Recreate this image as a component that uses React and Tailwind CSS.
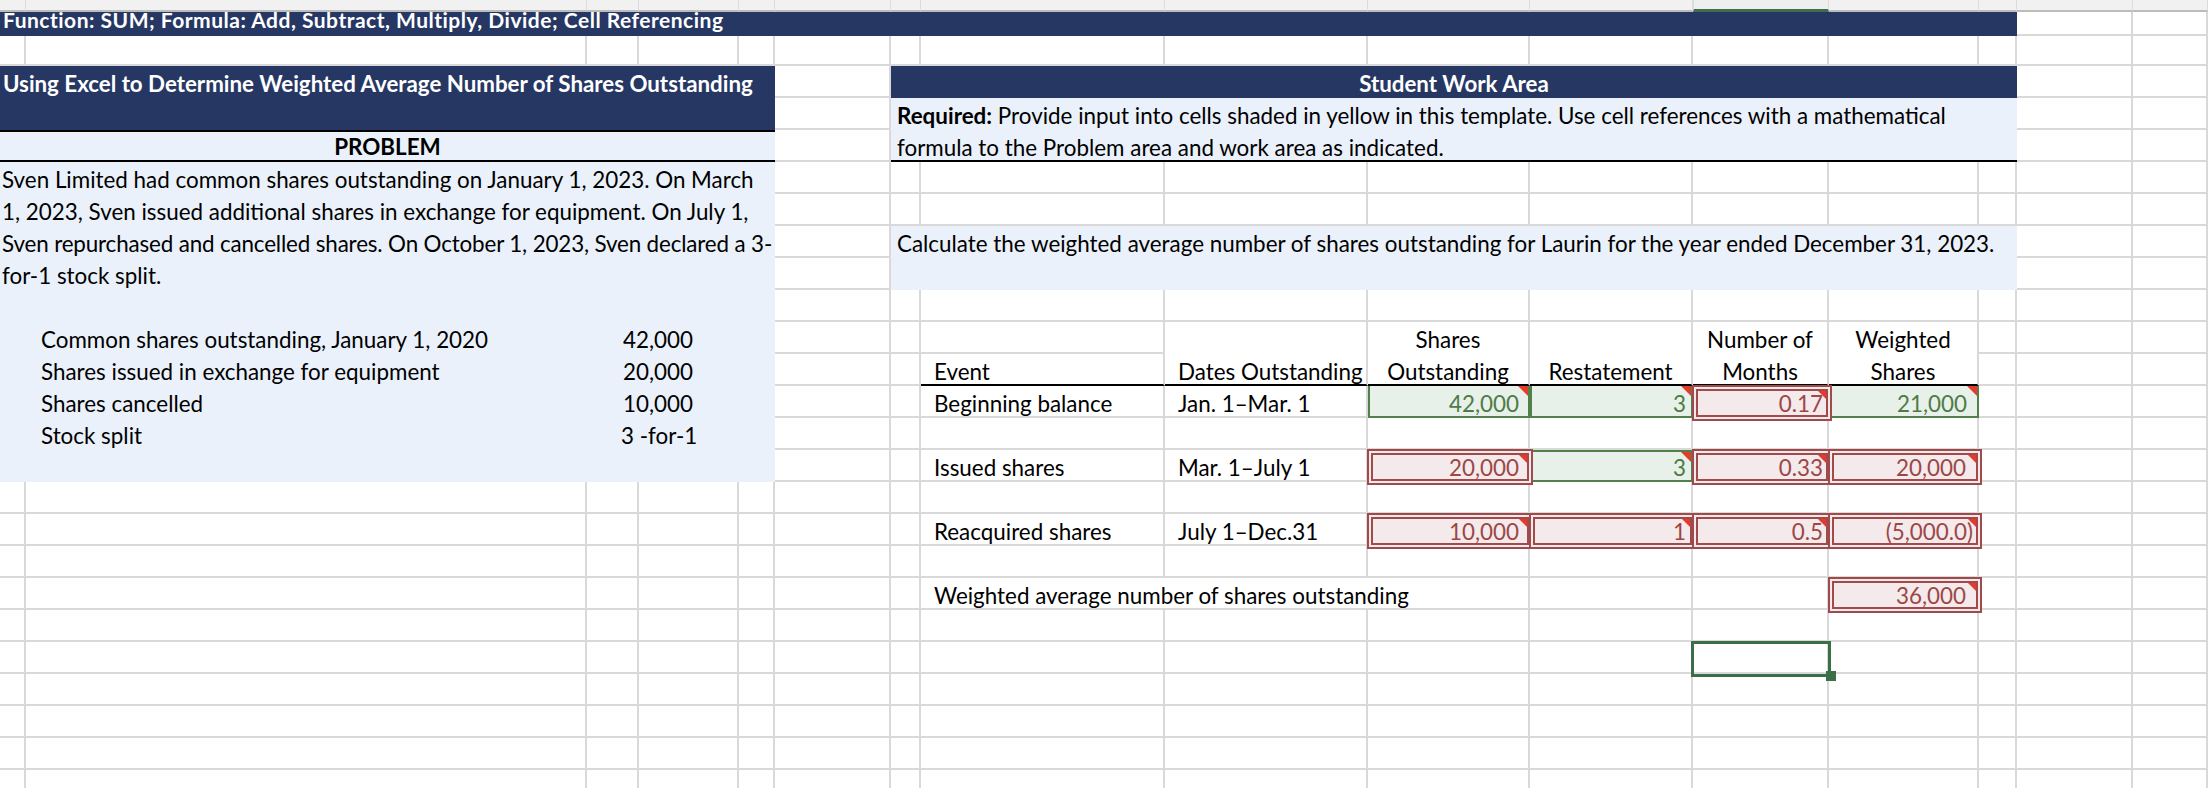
import React from "react";

const COLS = 16;
const ROWS = 26;

const line = "h-8 leading-[36px] whitespace-nowrap";

const items = [
  { label: "Common shares outstanding, January 1, 2020", value: "42,000" },
  { label: "Shares issued in exchange for equipment", value: "20,000" },
  { label: "Shares cancelled", value: "10,000" },
  { label: "Stock split", value: "3 -for-1", left: true },
];

function GridLines() {
  const cells = [];
  for (let r = 1; r <= ROWS; r++) {
    for (let c = 1; c <= COLS; c++) {
      cells.push(
        <div
          key={r + "-" + c}
          style={{ gridRow: r, gridColumn: c }}
          className={
            r === 1
              ? "bg-[#f1f1f1] border-r border-r-[#dcdcdc] border-b-2 border-b-[#bcbcbc]"
              : "border-r-2 border-b-2 border-[#d9d9d9]"
          }
        />
      );
    }
  }
  return cells;
}

function Triangle({ small }) {
  return small ? (
    <span className="absolute top-0 right-0 w-0 h-0 border-l-[8px] border-l-transparent border-t-[8px] border-t-[#e53a2c]" />
  ) : (
    <span className="absolute top-0 right-0 w-0 h-0 border-l-[10px] border-l-transparent border-t-[10px] border-t-[#e53a2c]" />
  );
}

function GreenCell({ pos, value, pad, first }) {
  return (
    <div
      className={`relative bg-[#e7f0e9] border-2 border-[#52804b] text-[#4e7a46] text-right whitespace-nowrap ${
        first ? "border-t-0 leading-[35px]" : "leading-[31px]"
      } ${pos} ${pad}`}
    >
      <Triangle />
      {value}
    </div>
  );
}

function RedCell({ pos, value, pad }) {
  return (
    <div className={`relative ${pos}`}>
      <div
        className={`absolute top-[-1px] left-[-1px] right-[-3px] bottom-[-3px] z-10 border-[6px] border-double border-[#a04a4b] bg-[#f4eaeb] text-[#9c4647] text-right leading-[25px] whitespace-nowrap ${pad}`}
      >
        <Triangle small />
        {value}
      </div>
    </div>
  );
}

function HeaderCell({ pos, top, bottom }) {
  return (
    <div className={`bg-white border-r-2 border-r-[#d9d9d9] border-b-2 border-b-black text-center ${pos}`}>
      <div className={line}>{top}</div>
      <div className={line}>{bottom}</div>
    </div>
  );
}

export default function App() {
  return (
    <div className="w-[2208px] h-[788px] overflow-hidden bg-white font-['Lato',sans-serif] text-[22.4px] text-black">
      <div className="grid grid-cols-[26px_561px_52px_100px_36px_116px_30px_244px_203px_162px_163px_136px_150px_38px_116px_75px] grid-rows-[12px_24px_30px_repeat(23,32px)]">
        <GridLines />

        {/* selected column header */}
        <div className="row-start-1 col-start-12 bg-[#efefef] border-x border-[#dcdcdc] border-b-[3px] border-b-[#3e6e4c]" />

        {/* title bar */}
        <div className="row-start-2 col-start-1 col-span-14 bg-[#263763] text-white font-bold text-[21px] tracking-[0.5px] leading-[15px] pl-[3px] whitespace-nowrap">
          Function: SUM; Formula: Add, Subtract, Multiply, Divide; Cell Referencing
        </div>

        {/* left: problem */}
        <div className="row-start-4 row-span-2 col-start-1 col-span-5 bg-[#263763] text-white font-bold text-[22.3px] pl-[3px]">
          <div className={line}>Using Excel to Determine Weighted Average Number of Shares Outstanding</div>
        </div>
        <div className="row-start-6 col-start-1 col-span-5 bg-[#eaf1fa] border-y-2 border-black font-bold text-center leading-[30px]">
          PROBLEM
        </div>
        <div className="row-start-7 row-span-10 col-start-1 col-span-5 bg-[#eaf1fa] overflow-hidden flex flex-col pl-[2px]">
          <div className={line}>Sven Limited had common shares outstanding on January 1, 2023. On March</div>
          <div className={line}>1, 2023, Sven issued additional shares in exchange for equipment. On July 1,</div>
          <div className={`tracking-[-0.15px] ${line}`}>
            Sven repurchased and cancelled shares. On October 1, 2023, Sven declared a 3-
          </div>
          <div className={line}>for-1 stock split.</div>
          <div className="h-8" />
          {items.map((it) => (
            <div key={it.label} className={`flex ${line}`}>
              <div className="w-[619px] pl-[39px]">{it.label}</div>
              <div className={it.left ? "w-[80px] text-left" : "w-[72px] text-right"}>{it.value}</div>
            </div>
          ))}
        </div>

        {/* right: student work area */}
        <div className="row-start-4 col-start-7 col-span-8 bg-[#263763] text-white font-bold text-[22.3px] text-center leading-[36px]">
          Student Work Area
        </div>
        <div className="row-start-5 row-span-2 col-start-7 col-span-8 bg-[#eaf1fa] border-b-2 border-black pl-[6px]">
          <div className={line}>
            <span className="font-bold">Required:</span> Provide input into cells shaded in yellow in this template. Use cell
            references with a mathematical
          </div>
          <div className={line}>formula to the Problem area and work area as indicated.</div>
        </div>
        <div className="row-start-9 row-span-2 col-start-7 col-span-8 bg-[#eaf1fa] pl-[6px]">
          <div className={line}>
            Calculate the weighted average number of shares outstanding for Laurin for the year ended December 31, 2023.
          </div>
        </div>

        {/* table header */}
        <div className={`row-start-13 col-start-8 bg-white border-r-2 border-r-[#d9d9d9] border-b-2 border-b-black pl-[13px] ${line}`}>
          Event
        </div>
        <div className="row-start-12 row-span-2 col-start-9 bg-white border-r-2 border-r-[#d9d9d9] border-b-2 border-b-black pl-[13px]">
          <div className={line} />
          <div className={line}>Dates Outstanding</div>
        </div>
        <HeaderCell pos="row-start-12 row-span-2 col-start-10" top="Shares" bottom="Outstanding" />
        <HeaderCell pos="row-start-12 row-span-2 col-start-11" top="" bottom="Restatement" />
        <HeaderCell pos="row-start-12 row-span-2 col-start-12" top="Number of" bottom="Months" />
        <HeaderCell pos="row-start-12 row-span-2 col-start-13" top="Weighted" bottom="Shares" />

        {/* beginning balance */}
        <div className={`row-start-14 col-start-8 pl-[13px] ${line}`}>Beginning balance</div>
        <div className={`row-start-14 col-start-9 pl-[13px] ${line}`}>Jan. 1–Mar. 1</div>
        <GreenCell pos="row-start-14 col-start-10" value="42,000" pad="pr-[9px]" first />
        <GreenCell pos="row-start-14 col-start-11" value="3" pad="pr-[5px]" first />
        <RedCell pos="row-start-14 col-start-12" value="0.17" pad="pr-[3px]" />
        <GreenCell pos="row-start-14 col-start-13" value="21,000" pad="pr-[10px]" first />

        {/* issued shares */}
        <div className={`row-start-16 col-start-8 pl-[13px] ${line}`}>Issued shares</div>
        <div className={`row-start-16 col-start-9 pl-[13px] ${line}`}>Mar. 1–July 1</div>
        <RedCell pos="row-start-16 col-start-10" value="20,000" pad="pr-[8px]" />
        <GreenCell pos="row-start-16 col-start-11" value="3" pad="pr-[5px]" />
        <RedCell pos="row-start-16 col-start-12" value="0.33" pad="pr-[3px]" />
        <RedCell pos="row-start-16 col-start-13" value="20,000" pad="pr-[10px]" />

        {/* reacquired shares */}
        <div className={`row-start-18 col-start-8 pl-[13px] ${line}`}>Reacquired shares</div>
        <div className={`row-start-18 col-start-9 pl-[13px] ${line}`}>July 1–Dec.31</div>
        <RedCell pos="row-start-18 col-start-10" value="10,000" pad="pr-[8px]" />
        <RedCell pos="row-start-18 col-start-11" value="1" pad="pr-[4px]" />
        <RedCell pos="row-start-18 col-start-12" value="0.5" pad="pr-[3px]" />
        <RedCell pos="row-start-18 col-start-13" value="(5,000.0)" pad="pr-[3px]" />

        {/* total */}
        <div className={`row-start-20 col-start-8 col-span-3 bg-white border-r-2 border-b-2 border-[#d9d9d9] pl-[13px] ${line}`}>
          Weighted average number of shares outstanding
        </div>
        <RedCell pos="row-start-20 col-start-13" value="36,000" pad="pr-[10px]" />

        {/* active cell */}
        <div className="row-start-22 col-start-12 relative">
          <div className="absolute top-[-1px] left-[-2px] right-[-2px] bottom-[-3px] border-[3px] border-[#3b6f47]" />
          <div className="absolute right-[-7px] bottom-[-7px] w-[10px] h-[10px] bg-[#3b6f47]" />
        </div>
      </div>
    </div>
  );
}
